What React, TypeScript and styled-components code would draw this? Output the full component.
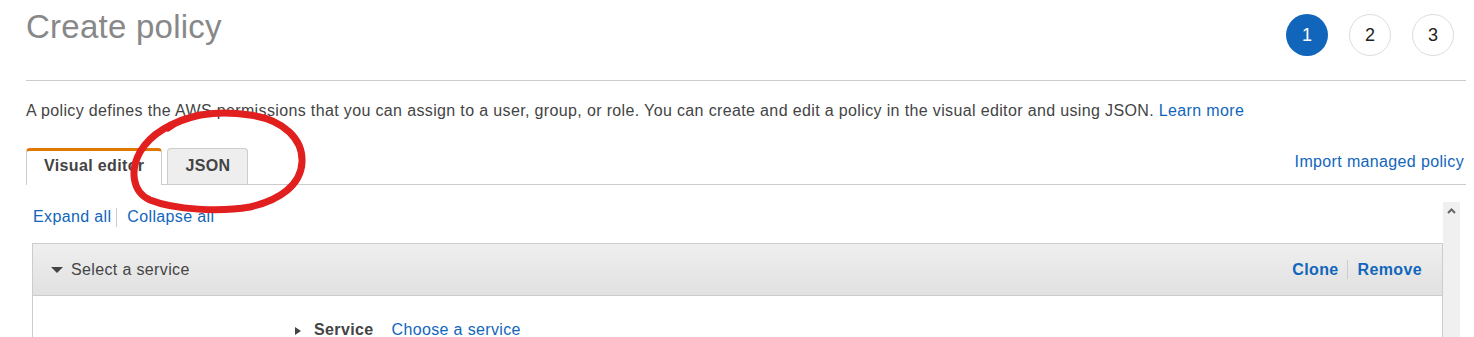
import styled, { createGlobalStyle, css } from 'styled-components';

const GlobalStyle = createGlobalStyle`
  html, body {
    margin: 0;
    padding: 0;
    background: #fff;
    overflow: hidden;
  }
  body {
    font-family: "Liberation Sans", Arial, sans-serif;
    color: #444;
  }
`;

const Page = styled.div`
  position: relative;
  box-sizing: border-box;
  height: 337px;
  overflow: hidden;
  padding: 0 8px 0 26px;
  font-size: 16px;
  line-height: 20px;
  letter-spacing: 0.36px;
`;

const Header = styled.header`
  display: flex;
  justify-content: space-between;
  align-items: flex-start;
  box-sizing: border-box;
  height: 81px;
  border-bottom: 1px solid #ccc;
`;

const Title = styled.h1`
  margin: 0;
  padding-top: 7px;
  font-size: 33px;
  line-height: 40px;
  font-weight: normal;
  letter-spacing: 0.25px;
  color: #888;
`;

const Steps = styled.ol`
  display: flex;
  gap: 21px;
  margin: 0;
  padding: 14px 12px 0 0;
  list-style: none;
  letter-spacing: 0;
`;

const Step = styled.li<{ $active?: boolean }>`
  display: flex;
  align-items: center;
  justify-content: center;
  box-sizing: border-box;
  width: 42px;
  height: 42px;
  border-radius: 50%;
  font-size: 18px;
  ${({ $active }) =>
    $active
      ? css`
          background: #1166bb;
          color: #fff;
        `
      : css`
          background: #fff;
          border: 1px solid #ddd;
          color: #222;
        `}
`;

const Intro = styled.p`
  margin: 20px 0 0;
`;

const Link = styled.a<{ $bold?: boolean }>`
  color: #1166bb;
  text-decoration: none;
  cursor: pointer;
  font-weight: ${({ $bold }) => ($bold ? 'bold' : 'normal')};
`;

const TabBar = styled.div`
  display: flex;
  justify-content: space-between;
  align-items: flex-end;
  margin-top: 27px;
  border-bottom: 1px solid #ccc;
`;

const Tabs = styled.div`
  display: flex;
  align-items: flex-end;
  gap: 5px;
`;

const Tab = styled.div<{ $active?: boolean }>`
  position: relative;
  box-sizing: border-box;
  padding: 0 17px;
  font-weight: bold;
  color: #444;
  border: 1px solid #ccc;
  border-bottom: none;
  border-radius: 4px 4px 0 0;
  ${({ $active }) =>
    $active
      ? css`
          height: 37px;
          margin-bottom: -1px;
          padding-top: 5px;
          border-top: 3px solid #e07700;
          background: #fff;
        `
      : css`
          height: 36px;
          padding-top: 7px;
          background: #eee;
        `}
`;

const ImportLink = styled(Link)`
  margin: 0 2px 12px 0;
`;

const Editor = styled.div`
  display: flex;
  margin: 0 6px;
  padding-top: 17px;
`;

const EditorContent = styled.div`
  flex: 1;
  padding-top: 5px;
`;

const Toggles = styled.div`
  display: flex;
  align-items: center;
  padding-left: 1px;
`;

const Divider = styled.span<{ $before?: number }>`
  width: 1px;
  height: 19px;
  margin: 0 10px 0 ${({ $before = 8 }) => $before}px;
  background: #ccc;
`;

const Panel = styled.section`
  margin-top: 16px;
  border: 1px solid #ccc;
  border-bottom: none;
`;

const PanelHeader = styled.div`
  display: flex;
  align-items: center;
  box-sizing: border-box;
  height: 52px;
  padding: 0 20px 0 18px;
  background: linear-gradient(#efefef, #e1e1e1);
  border-bottom: 1px solid #ccc;
`;

const CaretDown = styled.span`
  width: 0;
  height: 0;
  margin: 1px 8px 0 0;
  border-left: 6px solid transparent;
  border-right: 6px solid transparent;
  border-top: 6px solid #444;
`;

const PanelTitle = styled.span`
  flex: 1;
  color: #444;
`;

const Actions = styled.div`
  display: flex;
  align-items: center;
`;

const PanelBody = styled.div`
  height: 120px;
  padding: 24px 0 0 262px;
  background: #fff;
`;

const Row = styled.div`
  display: flex;
  align-items: center;
`;

const CaretRight = styled.span`
  width: 0;
  height: 0;
  margin: 1px 13px 0 0;
  border-top: 4.5px solid transparent;
  border-bottom: 4.5px solid transparent;
  border-left: 6px solid #444;
`;

const RowLabel = styled.span`
  font-weight: bold;
  color: #444;
  margin-right: 18px;
`;

const Scrollbar = styled.div`
  width: 17px;
  background: #f0f0f0;
`;

const Annotation = styled.svg`
  position: absolute;
  top: 0;
  left: 0;
  pointer-events: none;
`;

export default function App() {
  return (
    <>
      <GlobalStyle />
      <Page>
        <Header>
          <Title>Create policy</Title>
          <Steps>
            {[1, 2, 3].map((n) => (
              <Step key={n} $active={n === 1}>
                {n}
              </Step>
            ))}
          </Steps>
        </Header>
        <Intro>
          A policy defines the AWS permissions that you can assign to a user, group, or role. You can create and edit a
          policy in the visual editor and using JSON. <Link>Learn more</Link>
        </Intro>
        <TabBar>
          <Tabs>
            <Tab $active>Visual editor</Tab>
            <Tab>JSON</Tab>
          </Tabs>
          <ImportLink>Import managed policy</ImportLink>
        </TabBar>
        <Editor>
          <EditorContent>
            <Toggles>
              <Link>Expand all</Link>
              <Divider $before={5} />
              <Link>Collapse all</Link>
            </Toggles>
            <Panel>
              <PanelHeader>
                <CaretDown />
                <PanelTitle>Select a service</PanelTitle>
                <Actions>
                  <Link $bold>Clone</Link>
                  <Divider $before={8} />
                  <Link $bold>Remove</Link>
                </Actions>
              </PanelHeader>
              <PanelBody>
                <Row>
                  <CaretRight />
                  <RowLabel>Service</RowLabel>
                  <Link>Choose a service</Link>
                </Row>
              </PanelBody>
            </Panel>
          </EditorContent>
          <Scrollbar>
            <svg width="17" height="17" viewBox="0 0 17 17">
              <polyline points="5,11 8.5,7.5 12,11" fill="none" stroke="#666" strokeWidth="2" />
            </svg>
          </Scrollbar>
        </Editor>
        <Annotation width="1474" height="337" viewBox="0 0 1474 337">
          <path
            d="M 168 128 C 185 115, 215 110, 250 115 C 285 120, 303 140, 302 162 C 301 185, 280 200, 250 207 C 220 212, 175 210, 150 200 C 132 192, 130 170, 140 152 C 150 135, 170 122, 200 115"
            fill="none"
            stroke="#e21f1f"
            strokeWidth="7"
            strokeLinecap="round"
          />
        </Annotation>
      </Page>
    </>
  );
}
